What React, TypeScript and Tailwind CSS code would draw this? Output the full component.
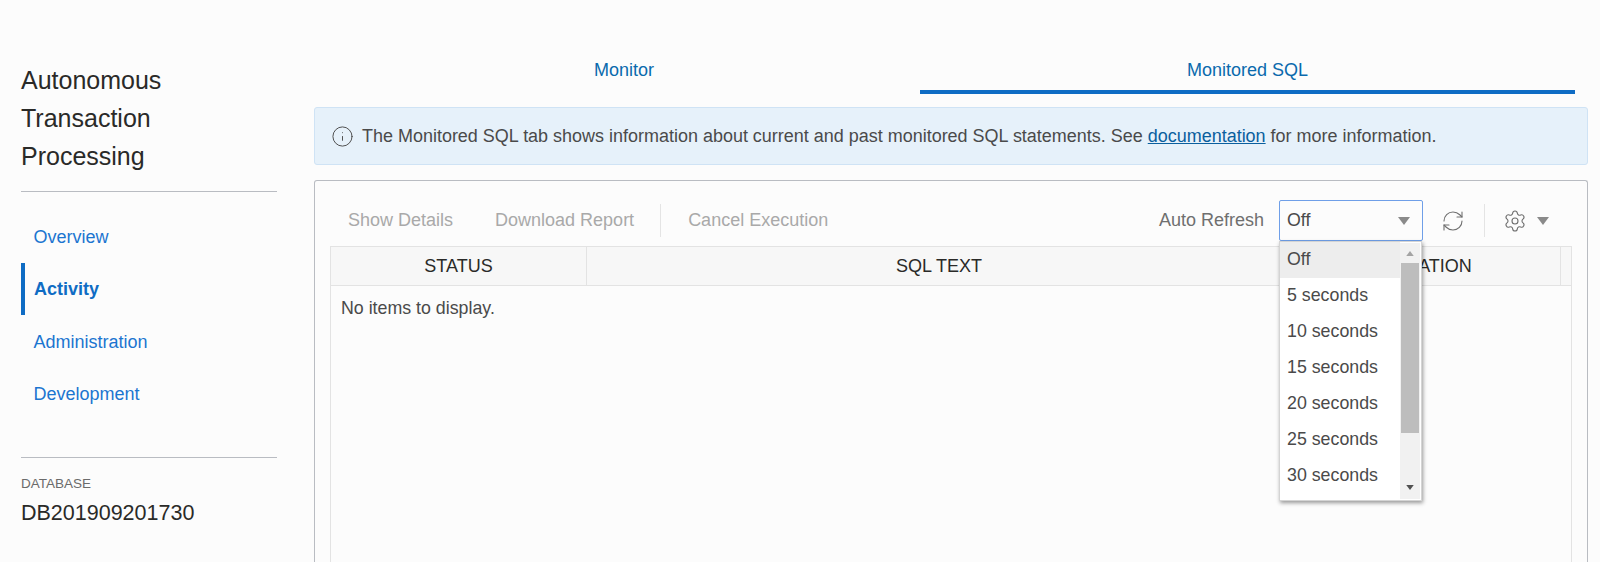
import React from 'react';
import { Info, RefreshCw, Settings } from 'lucide-react';

const NAV = ['Overview', 'Activity', 'Administration', 'Development'];
const OPTIONS = ['Off', '5 seconds', '10 seconds', '15 seconds', '20 seconds', '25 seconds', '30 seconds'];

function Caret({ className }: { className: string }) {
  return (
    <svg viewBox="0 0 12 8" className={className}>
      <path d="M0 0h12L6 8z" fill="currentColor" />
    </svg>
  );
}

function Sidebar() {
  return (
    <aside className="w-[256px] shrink-0 ml-[21px] pt-[61px]">
      <h1 className="text-[25px] leading-[38px] font-normal text-[#2a2a28] border-b border-[#b9bcc2] pb-[16px]">
        Autonomous<br />Transaction<br />Processing
      </h1>
      <nav className="mt-[18px] mb-[37px]">
        {NAV.map((item) => (
          <div
            key={item}
            className={`h-[52.5px] flex items-center pt-[2px] text-[18px] ${
              item === 'Activity' ? 'border-l-4 border-[#0f6cc4] pl-[9px] font-bold text-[#0f6cc4]' : 'pl-[12.5px] text-[#1b75d0]'
            }`}
          >
            {item}
          </div>
        ))}
      </nav>
      <div className="border-t border-[#b9bcc2] pt-[18px]">
        <div className="text-[13.5px] leading-[16px] text-[#6b6b6b]">DATABASE</div>
        <div className="text-[21.5px] leading-[28px] mt-[7px] text-[#2a2a28]">DB201909201730</div>
      </div>
    </aside>
  );
}

function AutoRefreshMenu() {
  return (
    <div className="absolute left-[964px] top-[60px] w-[143px] h-[260px] bg-white border border-[#d4d4d4] shadow-[1px_2px_4px_rgba(0,0,0,0.4)] flex z-10">
      <ul className="flex-1">
        {OPTIONS.map((o, i) => (
          <li
            key={o}
            className={`h-[36px] flex items-center pl-[7px] pb-[1px] text-[17.8px] text-[#4a4a4a] ${i === 0 ? 'bg-[#ededed]' : ''}`}
          >
            {o}
          </li>
        ))}
      </ul>
      <div className="w-[20px] my-[1px] mr-[1px] bg-[#f1f1f1] flex flex-col items-center">
        <div className="h-[20px] flex items-center">
          <Caret className="w-[10px] h-[5px] text-[#a3a3a3] rotate-180" />
        </div>
        <div className="w-[18px] h-[170px] bg-[#bdbdbd]" />
        <div className="flex-1 flex items-end pb-[9px]">
          <Caret className="w-[10px] h-[5px] text-[#505050]" />
        </div>
      </div>
    </div>
  );
}

function Panel() {
  return (
    <section className="relative flex-1 mt-[15px] px-[15px] border border-[#b9bcc2] border-b-0 rounded-t-[3px]">
      <div className="h-[65px] pt-[14px] flex items-center text-[18px] text-[#a9a9a9]">
        <span className="ml-[18px]">Show Details</span>
        <span className="ml-[42px]">Download Report</span>
        <span className="ml-[26px] h-[33px] border-l border-[#e4e4e4]" />
        <span className="ml-[27px]">Cancel Execution</span>
        <span className="ml-auto text-[#6f6f6f]">Auto Refresh</span>
        <div className="ml-[15px] w-[144px] h-[41px] border border-[#6f9fe8] rounded-[2px] flex items-center justify-between pl-[7px] pr-[12px] text-[17.8px] text-[#4a4a4a]">
          Off
          <Caret className="w-[12px] h-[8px] text-[#8a8a8a]" />
        </div>
        <RefreshCw size={24} strokeWidth={1.1} className="ml-[18px] text-[#6f6f6f]" />
        <span className="ml-[19px] h-[33px] border-l border-[#e4e4e4]" />
        <Settings size={24} strokeWidth={1.1} className="ml-[18px] text-[#6f6f6f]" />
        <Caret className="ml-[10px] mr-[23px] w-[12px] h-[8px] text-[#8a8a8a]" />
      </div>
      <div className="border border-[#e3e3e3] border-b-0 h-[400px]">
        <div className="h-[39px] flex items-center bg-[#f7f7f7] border-b border-[#e3e3e3] text-[18px] text-[#2a2a28]">
          <div className="w-[256px] h-full flex items-center justify-center border-r border-[#e3e3e3]">STATUS</div>
          <div className="w-[704px] text-center">SQL TEXT</div>
          <div className="w-[270px] h-full flex items-center justify-center border-r border-[#e3e3e3]">DURATION</div>
        </div>
        <div className="pl-[10px] pt-[11px] text-[17.8px] leading-[22px] text-[#4a4a4a]">No items to display.</div>
      </div>
      <AutoRefreshMenu />
    </section>
  );
}

export default function App() {
  return (
    <div className="h-screen overflow-hidden flex bg-[#fcfcfc] font-['Liberation_Sans',sans-serif]">
      <Sidebar />
      <main className="flex-1 ml-[37px] mr-[12px] flex flex-col">
        <div className="pt-[57px] flex shrink-0 text-[18px] text-[#0a6aad] ml-[12px] mr-[13px]">
          <div className="w-[594px] h-[37px] pl-[2px] text-center">Monitor</div>
          <div className="flex-1 h-[37px] text-center border-b-4 border-[#0f6cc4]">Monitored SQL</div>
        </div>
        <div className="mt-[13px] shrink-0 h-[58px] flex items-center pl-[16px] pr-[18px] bg-[#e6f1fa] border border-[#cfe3f5] rounded-[3px] text-[17.98px] text-[#4a4a4a]">
          <Info size={23} strokeWidth={1} className="mr-[8px]" />
          <span>
            The Monitored SQL tab shows information about current and past monitored SQL statements. See{' '}
            <a className="underline text-[#0a5f9e]">documentation</a> for more information.
          </span>
        </div>
        <Panel />
      </main>
    </div>
  );
}
